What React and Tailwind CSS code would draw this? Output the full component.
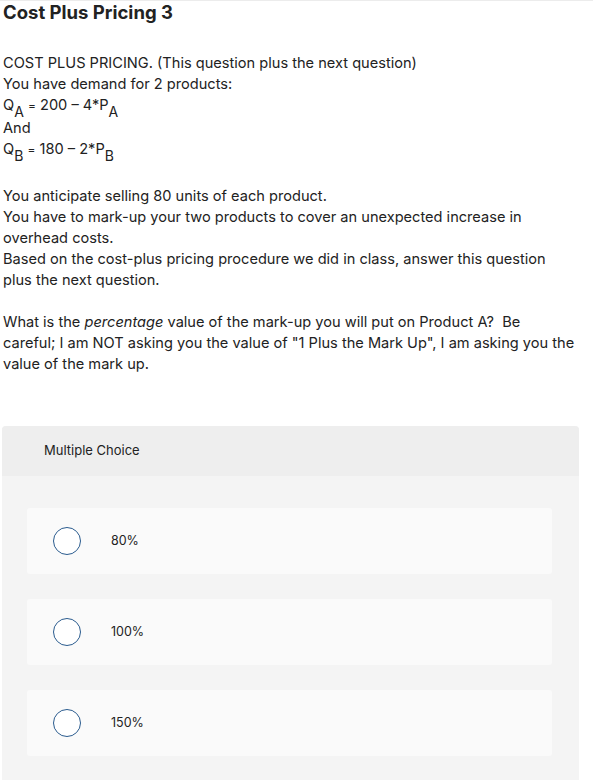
import React from "react";

const font = { fontFamily: "Inter, 'Open Sans', Arial, sans-serif" };

function Option({ label }) {
  return (
    <div className="flex h-[66px] items-center rounded-[3px] bg-[#fafafa] pl-[26px]">
      <span className="box-border h-[28px] w-[28px] shrink-0 rounded-full border-[1.5px] border-[#2a5b8e] bg-white" />
      <span className="ml-[30px] text-[12.5px] text-[#222]">{label}</span>
    </div>
  );
}

export default function App() {
  return (
    <div className="min-h-[780px] bg-white text-[#222]" style={font}>
      <div className="border-t border-[#ececec] pl-[3px] pt-[1px]">
        <h1 className="text-[18.5px] font-bold leading-[20px] text-[#222]">Cost Plus Pricing 3</h1>
      </div>
      <div className="pl-[3px] pr-[4px] pt-[31px] text-[14.6px] leading-[21px] whitespace-nowrap">
        <p>COST PLUS PRICING. (This question plus the next question)</p>
        <p>You have demand for 2 products:</p>
        <p className="h-[23px] leading-[21px]">
          Q<sub className="text-[14px] align-[-3px] leading-none">A</sub> <span className="text-[12px]">=</span> 200 – 4*P<sub className="text-[14px] align-[-3px] leading-none">A</sub>
        </p>
        <p>And</p>
        <p className="h-[23px] leading-[21px]">
          Q<sub className="text-[14px] align-[-3px] leading-none">B</sub> <span className="text-[12px]">=</span> 180 – 2*P<sub className="text-[14px] align-[-3px] leading-none">B</sub>
        </p>
        <div className="h-[24px]" />
        <p>You anticipate selling 80 units of each product.</p>
        <p>You have to mark-up your two products to cover an unexpected increase in<br />overhead costs.</p>
        <p>Based on the cost-plus pricing procedure we did in class, answer this question<br />plus the next question.</p>
        <div className="h-[21px]" />
        <p>
          What is the <em>percentage</em> value of the mark-up you will put on Product A?&nbsp; Be<br />careful; I am NOT asking you the value of "1 Plus the Mark Up", I am asking you the<br />value of the mark up.
        </p>
      </div>
      <div className="ml-[2px] mr-[14px] mt-[51px] overflow-hidden rounded-t-[4px] bg-[#f4f4f4]">
        <div className="flex h-[50px] items-center bg-[#eeeeee] pl-[42px] text-[13px] text-[#222]">
          Multiple Choice
        </div>
        <div className="flex flex-col gap-[25px] pl-[25px] pr-[27px] pb-[30px] pt-[32px]">
          <Option label="80%" />
          <Option label="100%" />
          <Option label="150%" />
        </div>
      </div>
    </div>
  );
}
